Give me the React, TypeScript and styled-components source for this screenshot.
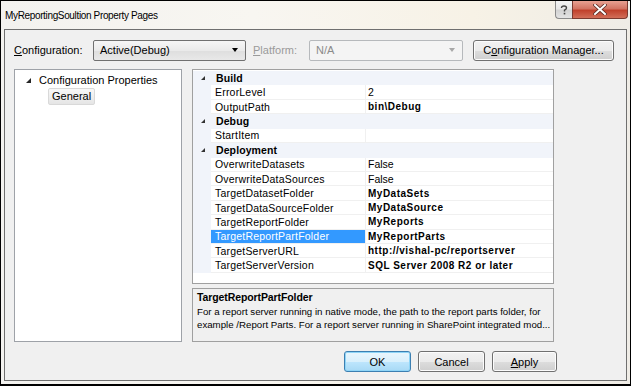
import React from "react";
import styled, { createGlobalStyle, css } from "styled-components";

const GlobalStyle = createGlobalStyle`
  html, body { margin: 0; padding: 0; background: #000; }
  body { width: 631px; height: 386px; overflow: hidden; font-family: "Liberation Sans", Arial, sans-serif; }
  * { box-sizing: border-box; }
`;

const Screen = styled.div`
  width: 631px;
  height: 386px;
  padding: 1px 1px 2px 1px;
  background: #000;
`;

const Window = styled.div`
  width: 629px;
  height: 383px;
  display: flex;
  flex-direction: column;
  background: linear-gradient(90deg, #f3f2ef 0%, #f8f6f1 40%, #f7f2e6 75%, #efece6 100%);
`;

const TitleBar = styled.div`
  height: 28px;
  display: flex;
  align-items: flex-start;
  padding-left: 4px;
`;

const Title = styled.div`
  font-family: "Liberation Sans", Arial, sans-serif;
  font-size: 10px;
  color: #000;
  margin-top: 9px;
  letter-spacing: -0.35px;
`;

const CaptionButtons = styled.div`
  margin-left: auto;
  margin-right: 2px;
  display: flex;
`;

const CaptionBtn = styled.div<{ $close?: boolean }>`
  height: 18px;
  display: flex;
  align-items: center;
  justify-content: center;
  border: 1px solid #8a8a8a;
  border-top: none;
  ${(p) =>
    p.$close
      ? css`
          width: 56px;
          border-radius: 0 0 4px 0;
          background: linear-gradient(180deg, #e8a192 0%, #d27463 45%, #c0412c 55%, #d26e58 100%);
          border-color: #7b3a30;
        `
      : css`
          width: 17px;
          border-radius: 0 0 0 4px;
          border-right: none;
          background: linear-gradient(180deg, #f4f4f4 0%, #e6e6e6 45%, #d3d3d3 55%, #e3e3e3 100%);
        `}
`;

const Client = styled.div`
  flex: 1;
  margin: 0 3px 3px 3px;
  border: 1px solid #6f6f6f;
  background: #f0f0f0;
  display: flex;
  flex-direction: column;
  padding: 9px 0 0 9px;
`;

const Toolbar = styled.div`
  display: flex;
  align-items: center;
  height: 22px;
`;

const Label = styled.span<{ $disabled?: boolean; $w: number }>`
  font-size: 11px;
  width: ${(p) => p.$w}px;
  color: ${(p) => (p.$disabled ? "#9a9a9a" : "#000")};
  u { text-decoration: underline; }
`;

const Combo = styled.div<{ $disabled?: boolean; $w: number }>`
  width: ${(p) => p.$w}px;
  height: 21px;
  display: flex;
  align-items: center;
  padding: 0 6px;
  font-size: 11px;
  border-radius: 2px;
  ${(p) =>
    p.$disabled
      ? css`
          border: 1px solid #b6b9bc;
          background: #f4f4f4;
          color: #8a8a8a;
        `
      : css`
          border: 1px solid #707070;
          background: linear-gradient(180deg, #f6f6f6 0%, #eaeaea 50%, #dedede 51%, #e8e8e8 100%);
          color: #000;
        `}
`;

const ComboText = styled.span`
  flex: 1;
`;

const Arrow = styled.span<{ $disabled?: boolean }>`
  width: 0;
  height: 0;
  border-left: 3.5px solid transparent;
  border-right: 3.5px solid transparent;
  border-top: 4px solid ${(p) => (p.$disabled ? "#a8a8a8" : "#000")};
  margin-right: 1px;
`;

const Button = styled.div<{ $w: number; $default?: boolean }>`
  width: ${(p) => p.$w}px;
  height: 21px;
  display: flex;
  align-items: center;
  justify-content: center;
  font-size: 11px;
  color: #000;
  border-radius: 3px;
  u { text-decoration: underline; }
  ${(p) =>
    p.$default
      ? css`
          border: 1px solid #3c7fb1;
          background: linear-gradient(180deg, #eaf6fd 0%, #d9f0fc 50%, #bee6fd 51%, #a7d9f5 100%);
          box-shadow: inset 0 0 0 1px #8fd5f7;
        `
      : css`
          border: 1px solid #707070;
          background: linear-gradient(180deg, #f2f2f2 0%, #ebebeb 50%, #dddddd 51%, #cfcfcf 100%);
          box-shadow: inset 0 0 0 1px #fcfcfc;
        `}
`;

const Main = styled.div`
  display: flex;
  gap: 10px;
  margin-top: 8px;
`;

const Tree = styled.div`
  width: 168px;
  height: 273px;
  background: #fff;
  border: 1px solid #9ea2a8;
  padding: 2px 0 0 10px;
  font-size: 11px;
`;

const TreeRow = styled.div<{ $indent: number }>`
  display: flex;
  align-items: center;
  height: 16px;
  padding-left: ${(p) => p.$indent}px;
`;

const Expander = styled.span`
  width: 0;
  height: 0;
  border-left: 5px solid transparent;
  border-bottom: 5px solid #262626;
  margin-right: 8px;
  margin-left: 1px;
`;

const TreeItem = styled.span<{ $selected?: boolean }>`
  padding: 1px 3px;
  line-height: 13px;
  border: 1px solid transparent;
  border-radius: 2px;
  ${(p) =>
    p.$selected &&
    css`
      border-color: #d9d9d9;
      background: linear-gradient(180deg, #f8f8f8 0%, #e5e5e5 100%);
    `}
`;

const RightCol = styled.div`
  width: 362px;
  display: flex;
  flex-direction: column;
  gap: 4px;
`;

const Grid = styled.div`
  height: 215px;
  background: #fff;
  border: 1px solid #a0a0a0;
  padding-top: 1px;
  font-size: 10.5px;
  display: grid;
  grid-template-columns: 18px 155px 1fr;
  grid-auto-rows: 14.43px;
  align-content: start;
`;

const Gutter = styled.div`
  background: #f1f4fa;
  display: flex;
  align-items: center;
  justify-content: center;
`;

const CatGlyph = styled.span`
  width: 0;
  height: 0;
  border-left: 4px solid transparent;
  border-bottom: 4px solid #333;
  margin-left: 1px;
`;

const CatName = styled.div`
  grid-column: span 2;
  background: #f1f4fa;
  font-weight: bold;
  font-size: 10.5px;
  display: flex;
  align-items: center;
  padding-left: 5px;
  letter-spacing: 0.1px;
`;

const NameCell = styled.div<{ $selected?: boolean }>`
  display: flex;
  align-items: center;
  padding-left: 4px;
  border-bottom: 1px solid #f0f0f0;
  border-right: 1px solid #f0f0f0;
  white-space: nowrap;
  letter-spacing: 0.2px;
  ${(p) =>
    p.$selected
      ? css`
          background: #3399ff;
          color: #fff;
        `
      : css`
          color: #000;
        `}
`;

const ValueCell = styled.div<{ $bold?: boolean }>`
  display: flex;
  align-items: center;
  padding-left: 2px;
  border-bottom: 1px solid #f0f0f0;
  white-space: nowrap;
  ${(p) =>
    p.$bold &&
    css`
      font-weight: bold;
      font-size: 10px;
      letter-spacing: 0.5px;
    `}
`;

const Desc = styled.div`
  height: 54px;
  border: 1px solid #a0a0a0;
  background: #f0f0f0;
  padding: 2px 4px;
  font-size: 9.7px;
  line-height: 13px;
  white-space: nowrap;
  overflow: hidden;
`;

const DescTitle = styled.div`
  font-weight: bold;
  font-size: 10.5px;
  letter-spacing: -0.1px;
  margin-bottom: 1px;
`;

const Footer = styled.div`
  display: flex;
  justify-content: flex-end;
  gap: 7px;
  margin-top: 9px;
  padding-right: 69px;
`;

type Row =
  | { cat: string }
  | { name: string; value: string; bold?: boolean; selected?: boolean };

const rows: Row[] = [
  { cat: "Build" },
  { name: "ErrorLevel", value: "2" },
  { name: "OutputPath", value: "bin\\Debug", bold: true },
  { cat: "Debug" },
  { name: "StartItem", value: "" },
  { cat: "Deployment" },
  { name: "OverwriteDatasets", value: "False" },
  { name: "OverwriteDataSources", value: "False" },
  { name: "TargetDatasetFolder", value: "MyDataSets", bold: true },
  { name: "TargetDataSourceFolder", value: "MyDataSource", bold: true },
  { name: "TargetReportFolder", value: "MyReports", bold: true },
  { name: "TargetReportPartFolder", value: "MyReportParts", bold: true, selected: true },
  { name: "TargetServerURL", value: "http://vishal-pc/reportserver", bold: true },
  { name: "TargetServerVersion", value: "SQL Server 2008 R2 or later", bold: true },
];

const HelpIcon = () => (
  <svg width="8" height="10" viewBox="0 0 8 10">
    <path d="M1.5 3 Q1.5 1 4 1 Q6.5 1 6.5 3 Q6.5 4.3 4.5 5.2 L4.5 6.5" fill="none" stroke="#444" strokeWidth="1.4" />
    <rect x="3.7" y="7.8" width="1.6" height="1.6" fill="#444" />
  </svg>
);

const CloseIcon = () => (
  <svg width="14" height="11" viewBox="0 0 14 11">
    <path d="M2 1 L12 10 M12 1 L2 10" stroke="#5a2a22" strokeWidth="3.6" strokeLinecap="square" />
    <path d="M2 1 L12 10 M12 1 L2 10" stroke="#fff" strokeWidth="2" strokeLinecap="square" />
  </svg>
);

export default function App() {
  return (
    <>
      <GlobalStyle />
      <Screen>
        <Window>
          <TitleBar>
            <Title>MyReportingSoultion Property Pages</Title>
            <CaptionButtons>
              <CaptionBtn>
                <HelpIcon />
              </CaptionBtn>
              <CaptionBtn $close>
                <CloseIcon />
              </CaptionBtn>
            </CaptionButtons>
          </TitleBar>
          <Client>
            <Toolbar>
              <Label $w={79}>
                <u>C</u>onfiguration:
              </Label>
              <Combo $w={153}>
                <ComboText>Active(Debug)</ComboText>
                <Arrow />
              </Combo>
              <Label $w={56} $disabled style={{ marginLeft: 7 }}>
                <u>P</u>latform:
              </Label>
              <Combo $w={154} $disabled>
                <ComboText>N/A</ComboText>
                <Arrow $disabled />
              </Combo>
              <Button $w={141} style={{ marginLeft: 10 }}>
                <span>
                  C<u>o</u>nfiguration Manager...
                </span>
              </Button>
            </Toolbar>
            <Main>
              <Tree>
                <TreeRow $indent={0}>
                  <Expander />
                  <span>Configuration Properties</span>
                </TreeRow>
                <TreeRow $indent={23}>
                  <TreeItem $selected>General</TreeItem>
                </TreeRow>
              </Tree>
              <RightCol>
                <Grid>
                  {rows.map((r, i) =>
                    "cat" in r ? (
                      <React.Fragment key={i}>
                        <Gutter>
                          <CatGlyph />
                        </Gutter>
                        <CatName>{r.cat}</CatName>
                      </React.Fragment>
                    ) : (
                      <React.Fragment key={i}>
                        <Gutter />
                        <NameCell $selected={r.selected}>{r.name}</NameCell>
                        <ValueCell $bold={r.bold}>{r.value}</ValueCell>
                      </React.Fragment>
                    )
                  )}
                </Grid>
                <Desc>
                  <DescTitle>TargetReportPartFolder</DescTitle>
                  <div>
                    For a report server running in native mode, the path to the report parts folder, for
                    <br />
                    example /Report Parts. For a report server running in SharePoint integrated mod...
                  </div>
                </Desc>
              </RightCol>
            </Main>
            <Footer>
              <Button $w={67} $default>
                OK
              </Button>
              <Button $w={67}>Cancel</Button>
              <Button $w={65}>
                <span>
                  <u>A</u>pply
                </span>
              </Button>
            </Footer>
          </Client>
        </Window>
      </Screen>
    </>
  );
}
